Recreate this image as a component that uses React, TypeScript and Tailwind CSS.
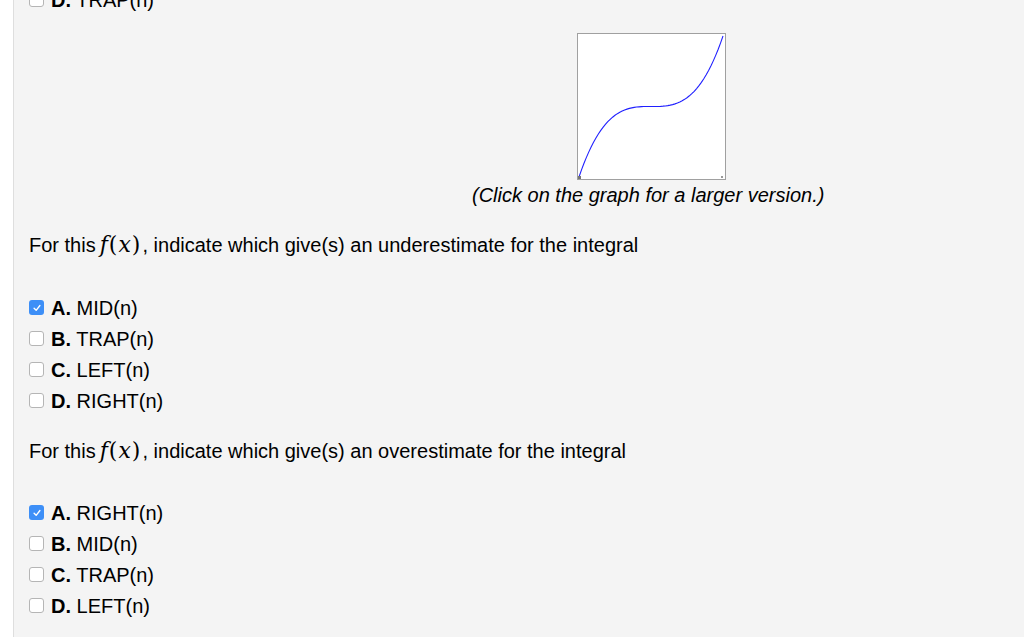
import React from "react";

const Checkbox: React.FC<{ checked?: boolean }> = ({ checked }) =>
  checked ? (
    <span className="flex h-[15px] w-[15px] shrink-0 items-center justify-center rounded-[3px] bg-[#3d8ff7]">
      <svg viewBox="0 0 12 12" className="h-[10px] w-[10px]">
        <path d="M2.5 6.3 L5 8.8 L9.5 3" fill="none" stroke="white" strokeWidth="1.6" strokeLinecap="round" strokeLinejoin="round" />
      </svg>
    </span>
  ) : (
    <span className="h-[15px] w-[15px] shrink-0 rounded-[3px] border border-[#b5b5b5] bg-white" />
  );

const Option: React.FC<{ letter: string; text: string; checked?: boolean }> = ({ letter, text, checked }) => (
  <div className="flex h-[31px] items-center gap-[7px]">
    <Checkbox checked={checked} />
    <span>
      <b>{letter}.</b> {text}
    </span>
  </div>
);

const Fx = () => (
  <span className="ml-[4px] mr-[1px] font-['DejaVu_Serif','Liberation_Serif',serif] italic text-[22px] tracking-[1px]">
    f<span className="not-italic">(</span>x<span className="not-italic">)</span>
  </span>
);

const Graph = () => {
  const pts: string[] = [];
  for (let i = 0; i <= 60; i++) {
    const t = i / 60;
    const y = 0.5 + 4 * Math.pow(t - 0.5, 3);
    pts.push(`${(1 + t * 144).toFixed(2)},${(143 - y * 141).toFixed(2)}`);
  }
  return (
    <div className="h-[147px] w-[149px] border border-[#a0a0a0] bg-white">
      <svg viewBox="0 0 147 145" className="h-full w-full">
        <polyline points={pts.join(" ")} fill="none" stroke="#2020ff" strokeWidth="1.1" />
        <rect x="0" y="142" width="3" height="3" fill="#777" />
        <rect x="143" y="142" width="2" height="2" fill="#999" />
      </svg>
    </div>
  );
};

export default function App() {
  return (
    <div className="flex h-[637px] w-[1024px] overflow-hidden bg-white font-['Liberation_Sans',Arial,sans-serif] text-[20px] text-black">
      <div className="w-[14px] shrink-0 border-r border-[#dedede]" />
      <div className="flex-1 bg-[#f4f4f4] pl-[15px]">
        <div className="-mt-[16px]">
          <Option letter="D" text="TRAP(n)" />
          <div className="mt-[18px] ml-[548px]">
            <Graph />
          </div>
          <div className="mt-[2px] ml-[443px] leading-[26px]">
            <span className="italic">(Click on the graph for a larger version.)</span>
          </div>
          <p className="mt-[24px] leading-[26px]">
            For this<Fx />, indicate which give(s) an underestimate for the integral
          </p>
          <div className="mt-[34px]">
            <Option letter="A" text="MID(n)" checked />
            <Option letter="B" text="TRAP(n)" />
            <Option letter="C" text="LEFT(n)" />
            <Option letter="D" text="RIGHT(n)" />
          </div>
          <p className="mt-[22px] leading-[26px]">
            For this<Fx />, indicate which give(s) an overestimate for the integral
          </p>
          <div className="mt-[33px]">
            <Option letter="A" text="RIGHT(n)" checked />
            <Option letter="B" text="MID(n)" />
            <Option letter="C" text="TRAP(n)" />
            <Option letter="D" text="LEFT(n)" />
          </div>
        </div>
      </div>
    </div>
  );
}
